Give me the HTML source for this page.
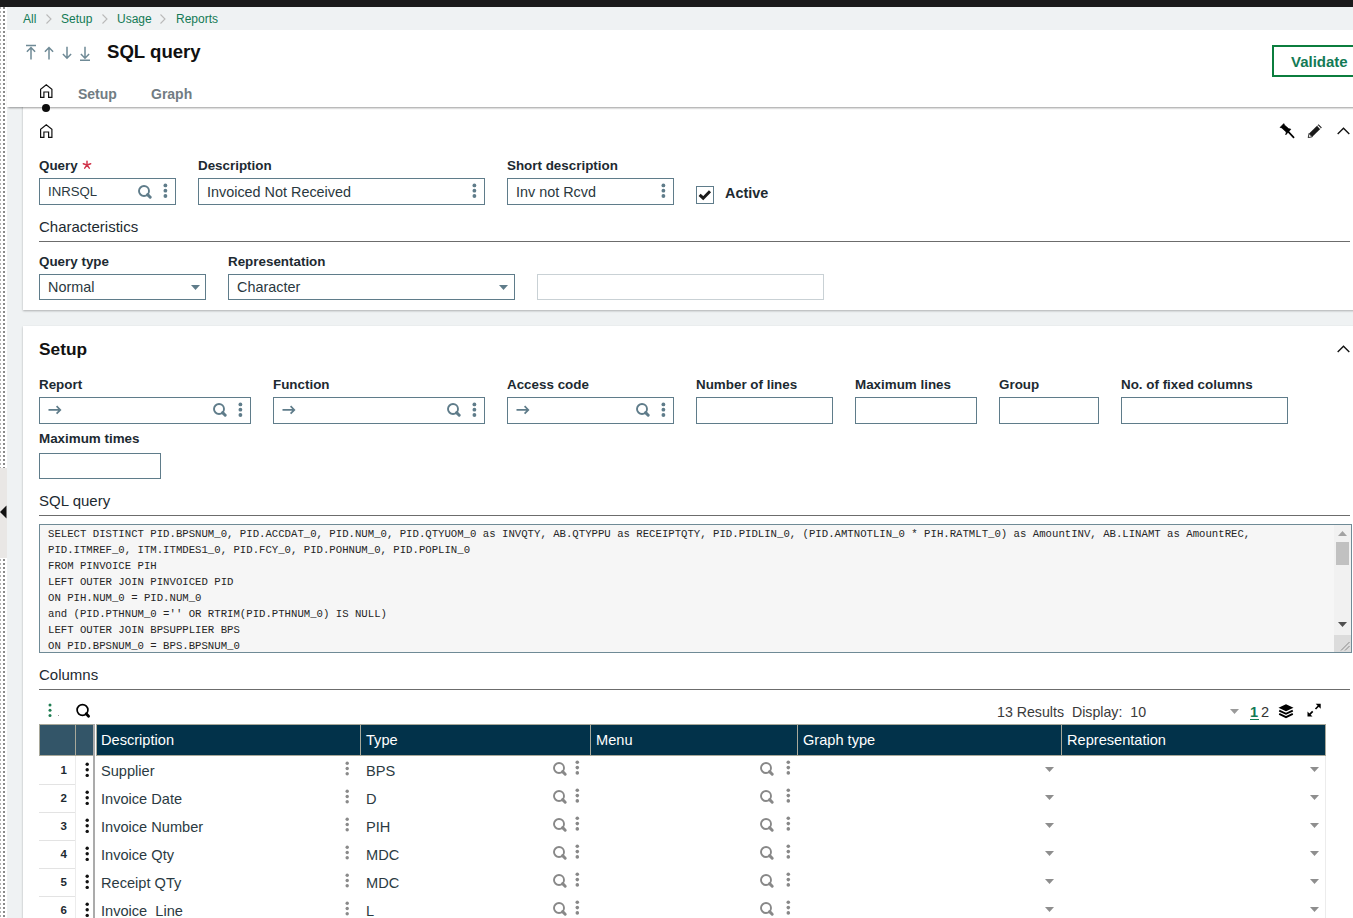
<!DOCTYPE html>
<html><head><meta charset="utf-8">
<style>
*{box-sizing:border-box}
html,body{margin:0;padding:0;width:1353px;height:918px;overflow:hidden;background:#eff2f3;font-family:"Liberation Sans",sans-serif;color:#1d2a31}
.a{position:absolute}
svg{position:absolute;overflow:visible}
#topbar{left:0;top:0;width:1353px;height:7px;background:#1b1b1b}
#dots{left:0;top:7px;width:7px;height:911px;background-color:#fff}
.dc{top:7px;height:911px}
#bc{left:7px;top:8px;width:1346px;height:22px;background:#eff2f3;font-size:12px}
#bc span{position:absolute;top:4px;color:#137a55}
.chev{top:6px;width:6px;height:10px}
#hdr{left:7px;top:30px;width:1360px;height:77px;background:#fff;box-shadow:0 2px 2px -1px rgba(0,0,0,.4)}
.title{left:107px;top:41px;font-size:18.6px;font-weight:bold;color:#101010;white-space:nowrap}
.tab{top:86px;font-size:14px;font-weight:bold;color:#717c83}
#btn{left:1272px;top:45px;width:100px;height:32px;border:2px solid #0b7d3e;color:#137a55;font-weight:bold;font-size:15px;padding:6px 0 0 17px;background:#fff}
.card{left:23px;background:#fff;box-shadow:0 1px 2px rgba(0,0,0,.28);width:1340px}
.lbl{font-size:13.4px;font-weight:bold;color:#1d2a31;white-space:nowrap}
.inp{border:1px solid #5f7c8a;background:#fff}
.itxt{font-size:14.4px;color:#2a3840;white-space:nowrap}
.sect{font-size:15px;color:#1d2a31;white-space:nowrap}
.hline{height:1px;background:#6c6c6c}
.sql{left:39px;top:524px;width:1313px;height:129px;border:1px solid #6f8a96;background:#f6f6f6;overflow:hidden}
.sql pre{margin:0;position:absolute;left:8px;top:1px;font-family:"Liberation Mono",monospace;font-size:10.66px;line-height:16px;color:#252525}
.th{top:725px;height:30px;background:#02324a}
.thtxt{top:732px;font-size:14.6px;color:#fff;white-space:nowrap}
.td{font-size:14.6px;color:#2b3a42;white-space:nowrap}
.rn{font-size:11.5px;font-weight:bold;color:#1d2a31;text-align:right;width:20px}
</style></head><body>
<div id="topbar" class="a"></div>
<div id="dots" class="a"></div>
<div class="a dc" style="left:0;width:1px;background:repeating-linear-gradient(#b0b0b0 0 2px,transparent 2px 4px)"></div>
<div class="a dc" style="left:3px;width:2px;background:repeating-linear-gradient(#8a8a8a 0 2px,transparent 2px 4px)"></div>
<div id="bc" class="a">
 <span style="left:16px">All</span>
 <svg class="chev" style="left:39px" viewBox="0 0 6 10"><path d="M0.5 0.5 L5 5 L0.5 9.5" fill="none" stroke="#b9b9b9" stroke-width="1.1"/></svg>
 <span style="left:54px">Setup</span>
 <svg class="chev" style="left:95px" viewBox="0 0 6 10"><path d="M0.5 0.5 L5 5 L0.5 9.5" fill="none" stroke="#b9b9b9" stroke-width="1.1"/></svg>
 <span style="left:110px">Usage</span>
 <svg class="chev" style="left:153px" viewBox="0 0 6 10"><path d="M0.5 0.5 L5 5 L0.5 9.5" fill="none" stroke="#b9b9b9" stroke-width="1.1"/></svg>
 <span style="left:169px">Reports</span>
</div>
<!-- card 1 -->
<div class="a card" style="top:104px;height:206px"></div>
<div id="hdr" class="a"></div>
<!-- header arrows -->
<svg style="left:25px;top:44px" width="12" height="16" viewBox="0 0 12 16"><g fill="none" stroke="#6f8a96" stroke-width="1.5"><path d="M1 1.5H11M6 3.5V15.5M1.9 7.8L6 3.5L10.1 7.8"/></g></svg>
<svg style="left:43px;top:44px" width="12" height="16" viewBox="0 0 12 16"><g fill="none" stroke="#6f8a96" stroke-width="1.5"><path d="M6 3.5V15.5M1.9 7.8L6 3.5L10.1 7.8"/></g></svg>
<svg style="left:61px;top:44px" width="12" height="18" viewBox="0 0 12 18"><g fill="none" stroke="#6f8a96" stroke-width="1.5"><path d="M6 2.8V14.2M1.9 10L6 14.2L10.1 10"/></g></svg>
<svg style="left:79px;top:44px" width="12" height="18" viewBox="0 0 12 18"><g fill="none" stroke="#6f8a96" stroke-width="1.5"><path d="M6 2.8V14.2M1.9 10L6 14.2L10.1 10M1 16.3H11"/></g></svg>
<div class="a title">SQL query</div>
<!-- tabs -->
<svg style="left:40px;top:84px" width="13" height="14" viewBox="0 0 13 14"><path d="M0.6 13.4V5.3L6.25 0.8L11.9 5.3V13.4H8.6V8H3.9V13.4Z" fill="none" stroke="#111" stroke-width="1.2"/></svg>
<div class="a" style="left:42px;top:104px;width:8px;height:8px;border-radius:50%;background:#0d0d0d"></div>
<div class="a tab" style="left:78px">Setup</div>
<div class="a tab" style="left:151px">Graph</div>
<div id="btn" class="a">Validate</div>

<svg style="left:40px;top:124px" width="13" height="14" viewBox="0 0 13 14"><path d="M0.6 13.4V5.3L6.25 0.8L11.9 5.3V13.4H8.6V8H3.9V13.4Z" fill="none" stroke="#111" stroke-width="1.2"/></svg>
<!-- pin -->
<svg style="left:1279px;top:122px" width="16" height="17" viewBox="0 0 16 17"><path d="M4.8 1.6L5.5 3.1L9.6 6.6L11.9 7.2L6.7 12.9L7.2 10.1L2.7 5.9L1.0 5.4Z" fill="#000" stroke="#000" stroke-width="0.6" stroke-linejoin="round"/><path d="M9 9.4L14.6 15.4" stroke="#000" stroke-width="1.7" stroke-linecap="round"/></svg>
<!-- pencil -->
<svg style="left:1306px;top:122px" width="17" height="17" viewBox="0 0 17 17"><path d="M3.1 11.45L12.6 2.25L15.8 5.55L6.3 14.75Z" fill="#1a1a1a"/><path d="M11.4 3.45L14.6 6.75" stroke="#fff" stroke-width="1.1"/><path d="M2.2 15.6L3.1 11.45L6.3 14.75Z" fill="#fff" stroke="#1a1a1a" stroke-width="0.9" stroke-linejoin="round"/><path d="M3.9 12.3L5.4 13.9" stroke="#1a1a1a" stroke-width="0.8"/></svg>
<svg style="left:1337px;top:127px" width="13" height="8" viewBox="0 0 13 8"><path d="M0.7 7L6.5 1.2L12.3 7" fill="none" stroke="#111" stroke-width="1.4"/></svg>

<div class="a lbl" style="left:39px;top:158px">Query</div>
<svg style="left:79px;top:157px" width="16" height="16" viewBox="0 0 16 16"><path d="M8 8L8.00 4.10M8 8L11.71 6.79M8 8L10.29 11.16M8 8L5.71 11.16M8 8L4.29 6.79" stroke="#d0334a" stroke-width="1.45" stroke-linecap="round"/></svg>
<div class="a inp" style="left:39px;top:178px;width:137px;height:27px"></div>
<div class="a itxt" style="left:48px;top:184px;font-size:13.2px">INRSQL</div>
<div class="a lbl" style="left:198px;top:158px">Description</div>
<div class="a inp" style="left:198px;top:178px;width:287px;height:27px"></div>
<div class="a itxt" style="left:207px;top:184px">Invoiced Not Received</div>
<div class="a lbl" style="left:507px;top:158px">Short description</div>
<div class="a inp" style="left:507px;top:178px;width:167px;height:27px"></div>
<div class="a itxt" style="left:516px;top:184px">Inv not Rcvd</div>
<div class="a" style="left:696px;top:186px;width:18px;height:18px;border:1px solid #5f7c8a;background:#fff"></div>
<svg style="left:698px;top:189px" width="14" height="12" viewBox="0 0 14 12"><path d="M1.6 5.8L5.2 9.2L12 2.2" fill="none" stroke="#1a1a1a" stroke-width="3"/></svg>
<div class="a lbl" style="left:725px;top:185px;font-size:14.4px">Active</div>

<div class="a sect" style="left:39px;top:218px">Characteristics</div>
<div class="a hline" style="left:39px;top:241px;width:1311px"></div>
<div class="a lbl" style="left:39px;top:253.5px">Query type</div>
<div class="a inp" style="left:39px;top:274px;width:167px;height:26px"></div>
<div class="a itxt" style="left:48px;top:278.5px">Normal</div>
<svg style="left:191px;top:285px" width="9" height="5" viewBox="0 0 9 5"><path d="M0 0H9L4.5 5Z" fill="#5f7c8a"/></svg>
<div class="a lbl" style="left:228px;top:253.5px">Representation</div>
<div class="a inp" style="left:228px;top:274px;width:287px;height:26px"></div>
<div class="a itxt" style="left:237px;top:278.5px">Character</div>
<svg style="left:499px;top:285px" width="9" height="5" viewBox="0 0 9 5"><path d="M0 0H9L4.5 5Z" fill="#5f7c8a"/></svg>
<div class="a" style="left:537px;top:274px;width:287px;height:26px;border:1px solid #c9d1d5"></div>

<!-- card 2 -->
<div class="a card" style="top:326px;height:700px"></div>
<div class="a" style="left:39px;top:339px;font-size:17.3px;font-weight:bold;color:#111">Setup</div>
<svg style="left:1337px;top:345px" width="13" height="8" viewBox="0 0 13 8"><path d="M0.7 7L6.5 1.2L12.3 7" fill="none" stroke="#111" stroke-width="1.4"/></svg>

<div class="a lbl" style="left:39px;top:376.5px">Report</div>
<div class="a inp" style="left:39px;top:397px;width:212px;height:27px"></div>
<div class="a lbl" style="left:273px;top:376.5px">Function</div>
<div class="a inp" style="left:273px;top:397px;width:212px;height:27px"></div>
<div class="a lbl" style="left:507px;top:376.5px">Access code</div>
<div class="a inp" style="left:507px;top:397px;width:167px;height:27px"></div>
<div class="a lbl" style="left:696px;top:376.5px">Number of lines</div>
<div class="a inp" style="left:696px;top:397px;width:137px;height:27px"></div>
<div class="a lbl" style="left:855px;top:376.5px">Maximum lines</div>
<div class="a inp" style="left:855px;top:397px;width:122px;height:27px"></div>
<div class="a lbl" style="left:999px;top:376.5px">Group</div>
<div class="a inp" style="left:999px;top:397px;width:100px;height:27px"></div>
<div class="a lbl" style="left:1121px;top:376.5px">No. of fixed columns</div>
<div class="a inp" style="left:1121px;top:397px;width:167px;height:27px"></div>
<div class="a lbl" style="left:39px;top:431px">Maximum times</div>
<div class="a inp" style="left:39px;top:453px;width:122px;height:26px"></div>

<div class="a sect" style="left:39px;top:492px">SQL query</div>
<div class="a hline" style="left:39px;top:515px;width:1311px"></div>
<div class="a sql"><pre>SELECT DISTINCT PID.BPSNUM_0, PID.ACCDAT_0, PID.NUM_0, PID.QTYUOM_0 as INVQTY, AB.QTYPPU as RECEIPTQTY, PID.PIDLIN_0, (PID.AMTNOTLIN_0 * PIH.RATMLT_0) as AmountINV, AB.LINAMT as AmountREC,
PID.ITMREF_0, ITM.ITMDES1_0, PID.FCY_0, PID.POHNUM_0, PID.POPLIN_0
FROM PINVOICE PIH
LEFT OUTER JOIN PINVOICED PID
ON PIH.NUM_0 = PID.NUM_0
and (PID.PTHNUM_0 ='' OR RTRIM(PID.PTHNUM_0) IS NULL)
LEFT OUTER JOIN BPSUPPLIER BPS
ON PID.BPSNUM_0 = BPS.BPSNUM_0
LEFT OUTER JOIN ITMMASTER ITM</pre>
 <div class="a" style="left:1294px;top:0;width:17px;height:127px;background:#f1f1f1"></div>
 <svg style="left:1298px;top:6px" width="9" height="5" viewBox="0 0 9 5"><path d="M0 5H9L4.5 0Z" fill="#a3a3a3"/></svg>
 <div class="a" style="left:1296px;top:17px;width:13px;height:23px;background:#c1c1c1"></div>
 <svg style="left:1298px;top:97px" width="9" height="5" viewBox="0 0 9 5"><path d="M0 0H9L4.5 5Z" fill="#505050"/></svg>
 <div class="a" style="left:1294px;top:110px;width:17px;height:17px;background:#dcdcdc"></div>
 <svg style="left:1300px;top:116px" width="10" height="10" viewBox="0 0 10 10"><path d="M9.5 1L1 9.5M9.5 5L5 9.5" stroke="#8a8a8a" stroke-width="1"/></svg>
</div>

<div class="a sect" style="left:39px;top:666px">Columns</div>
<div class="a hline" style="left:39px;top:689px;width:1311px"></div>
<svg style="left:136.8px;top:184px" width="16" height="16" viewBox="0 0 16 16"><circle cx="7" cy="7" r="5.0" fill="none" stroke="#5f7c8a" stroke-width="1.9"/><path d="M10.6 10.6L13.2 13.2" stroke="#5f7c8a" stroke-width="3.0" stroke-linecap="round"/></svg>
<svg style="left:162.90px;top:183.30px" width="4.80" height="15.40"><circle cx="2.40" cy="2.40" r="1.90" fill="#5f7c8a"/><circle cx="2.40" cy="7.70" r="1.90" fill="#5f7c8a"/><circle cx="2.40" cy="13.00" r="1.90" fill="#5f7c8a"/></svg>
<svg style="left:471.70px;top:183.30px" width="4.80" height="15.40"><circle cx="2.40" cy="2.40" r="1.90" fill="#5f7c8a"/><circle cx="2.40" cy="7.70" r="1.90" fill="#5f7c8a"/><circle cx="2.40" cy="13.00" r="1.90" fill="#5f7c8a"/></svg>
<svg style="left:660.60px;top:183.30px" width="4.80" height="15.40"><circle cx="2.40" cy="2.40" r="1.90" fill="#5f7c8a"/><circle cx="2.40" cy="7.70" r="1.90" fill="#5f7c8a"/><circle cx="2.40" cy="13.00" r="1.90" fill="#5f7c8a"/></svg>
<svg style="left:47.5px;top:405px" width="14" height="10" viewBox="0 0 14 10"><path d="M0.5 4.9H12.2M8.6 1.2L12.3 4.9L8.6 8.6" fill="none" stroke="#5f7c8a" stroke-width="1.7"/></svg>
<svg style="left:212.2px;top:402px" width="16" height="16" viewBox="0 0 16 16"><circle cx="7" cy="7" r="5.0" fill="none" stroke="#5f7c8a" stroke-width="1.9"/><path d="M10.6 10.6L13.2 13.2" stroke="#5f7c8a" stroke-width="3.0" stroke-linecap="round"/></svg>
<svg style="left:237.70px;top:402.30px" width="4.80" height="15.40"><circle cx="2.40" cy="2.40" r="1.90" fill="#5f7c8a"/><circle cx="2.40" cy="7.70" r="1.90" fill="#5f7c8a"/><circle cx="2.40" cy="13.00" r="1.90" fill="#5f7c8a"/></svg>
<svg style="left:281.5px;top:405px" width="14" height="10" viewBox="0 0 14 10"><path d="M0.5 4.9H12.2M8.6 1.2L12.3 4.9L8.6 8.6" fill="none" stroke="#5f7c8a" stroke-width="1.7"/></svg>
<svg style="left:446.2px;top:402px" width="16" height="16" viewBox="0 0 16 16"><circle cx="7" cy="7" r="5.0" fill="none" stroke="#5f7c8a" stroke-width="1.9"/><path d="M10.6 10.6L13.2 13.2" stroke="#5f7c8a" stroke-width="3.0" stroke-linecap="round"/></svg>
<svg style="left:471.70px;top:402.30px" width="4.80" height="15.40"><circle cx="2.40" cy="2.40" r="1.90" fill="#5f7c8a"/><circle cx="2.40" cy="7.70" r="1.90" fill="#5f7c8a"/><circle cx="2.40" cy="13.00" r="1.90" fill="#5f7c8a"/></svg>
<svg style="left:515.5px;top:405px" width="14" height="10" viewBox="0 0 14 10"><path d="M0.5 4.9H12.2M8.6 1.2L12.3 4.9L8.6 8.6" fill="none" stroke="#5f7c8a" stroke-width="1.7"/></svg>
<svg style="left:635.2px;top:402px" width="16" height="16" viewBox="0 0 16 16"><circle cx="7" cy="7" r="5.0" fill="none" stroke="#5f7c8a" stroke-width="1.9"/><path d="M10.6 10.6L13.2 13.2" stroke="#5f7c8a" stroke-width="3.0" stroke-linecap="round"/></svg>
<svg style="left:660.70px;top:402.30px" width="4.80" height="15.40"><circle cx="2.40" cy="2.40" r="1.90" fill="#5f7c8a"/><circle cx="2.40" cy="7.70" r="1.90" fill="#5f7c8a"/><circle cx="2.40" cy="13.00" r="1.90" fill="#5f7c8a"/></svg>
<div class="a" style="left:46px;top:701px"><svg style="left:2.00px;top:2.30px" width="4.00" height="14.40"><circle cx="2.00" cy="2.00" r="1.50" fill="#1f7d52"/><circle cx="2.00" cy="7.20" r="1.50" fill="#1f7d52"/><circle cx="2.00" cy="12.40" r="1.50" fill="#1f7d52"/></svg><div class="a" style="left:11.5px;top:13.5px;width:1.5px;height:1.5px;background:#999"></div></div>
<svg style="left:75px;top:703px" width="16" height="16" viewBox="0 0 16 16"><circle cx="7.5" cy="7" r="5.4" fill="none" stroke="#000" stroke-width="1.7"/><path d="M11.2 10.7L13.6 13.2" stroke="#000" stroke-width="2.8" stroke-linecap="round"/></svg>
<div class="a" style="left:39px;top:724px;width:1287px;height:32px;background:#a8a89a"></div>
<div class="a" style="left:40px;top:725px;width:35px;height:30px;background:#335568"></div>
<div class="a" style="left:76px;top:725px;width:17px;height:30px;background:#335568"></div>
<div class="a" style="left:93px;top:724px;width:3px;height:194px;background:#fff"></div>
<div class="a" style="left:96px;top:724px;width:1px;height:32px;background:#a8a89a"></div>
<div class="a" style="left:93px;top:724px;width:2px;height:194px;background:#ababab"></div>
<div class="a th" style="left:97px;width:263px"></div>
<div class="a thtxt" style="left:101px">Description</div>
<div class="a th" style="left:361px;width:229px"></div>
<div class="a thtxt" style="left:366px">Type</div>
<div class="a th" style="left:591px;width:206px"></div>
<div class="a thtxt" style="left:596px">Menu</div>
<div class="a th" style="left:798px;width:263px"></div>
<div class="a thtxt" style="left:803px">Graph type</div>
<div class="a th" style="left:1062px;width:263px"></div>
<div class="a thtxt" style="left:1067px">Representation</div>
<div class="a" style="left:39px;top:756px;width:54px;height:162px;background:#fff"></div>
<div class="a" style="left:75px;top:756px;width:1px;height:162px;background:#ececec"></div>
<div class="a" style="left:1325px;top:756px;width:1px;height:162px;background:#ececec"></div>
<div class="a" style="left:39px;top:784px;width:36px;height:1px;background:#e3e3e3"></div>
<div class="a rn" style="left:47px;top:764px">1</div>
<svg style="left:84.80px;top:761.70px" width="4.40" height="15.60"><circle cx="2.20" cy="2.20" r="1.70" fill="#111"/><circle cx="2.20" cy="7.80" r="1.70" fill="#111"/><circle cx="2.20" cy="13.40" r="1.70" fill="#111"/></svg>
<div class="a td" style="left:101px;top:763px;white-space:pre">Supplier</div>
<svg style="left:344.80px;top:760.50px" width="4.40" height="15.00"><circle cx="2.20" cy="2.20" r="1.70" fill="#8a8a8a"/><circle cx="2.20" cy="7.50" r="1.70" fill="#8a8a8a"/><circle cx="2.20" cy="12.80" r="1.70" fill="#8a8a8a"/></svg>
<div class="a td" style="left:366px;top:763px">BPS</div>
<svg style="left:552px;top:761px" width="16" height="16" viewBox="0 0 16 16"><circle cx="7" cy="7" r="5.0" fill="none" stroke="#888" stroke-width="1.9"/><path d="M10.6 10.6L13.2 13.2" stroke="#888" stroke-width="3.0" stroke-linecap="round"/></svg>
<svg style="left:574.70px;top:760.40px" width="4.60" height="15.20"><circle cx="2.30" cy="2.30" r="1.80" fill="#888"/><circle cx="2.30" cy="7.60" r="1.80" fill="#888"/><circle cx="2.30" cy="12.90" r="1.80" fill="#888"/></svg>
<svg style="left:758.5px;top:761px" width="16" height="16" viewBox="0 0 16 16"><circle cx="7" cy="7" r="5.0" fill="none" stroke="#888" stroke-width="1.9"/><path d="M10.6 10.6L13.2 13.2" stroke="#888" stroke-width="3.0" stroke-linecap="round"/></svg>
<svg style="left:786.20px;top:760.40px" width="4.60" height="15.20"><circle cx="2.30" cy="2.30" r="1.80" fill="#888"/><circle cx="2.30" cy="7.60" r="1.80" fill="#888"/><circle cx="2.30" cy="12.90" r="1.80" fill="#888"/></svg>
<svg style="left:1045px;top:767px" width="9" height="5" viewBox="0 0 9 5"><path d="M0 0H9L4.5 5Z" fill="#8e8e8e"/></svg>
<svg style="left:1310px;top:767px" width="9" height="5" viewBox="0 0 9 5"><path d="M0 0H9L4.5 5Z" fill="#8e8e8e"/></svg>
<div class="a" style="left:39px;top:812px;width:36px;height:1px;background:#e3e3e3"></div>
<div class="a rn" style="left:47px;top:792px">2</div>
<svg style="left:84.80px;top:789.70px" width="4.40" height="15.60"><circle cx="2.20" cy="2.20" r="1.70" fill="#111"/><circle cx="2.20" cy="7.80" r="1.70" fill="#111"/><circle cx="2.20" cy="13.40" r="1.70" fill="#111"/></svg>
<div class="a td" style="left:101px;top:791px;white-space:pre">Invoice Date</div>
<svg style="left:344.80px;top:788.50px" width="4.40" height="15.00"><circle cx="2.20" cy="2.20" r="1.70" fill="#8a8a8a"/><circle cx="2.20" cy="7.50" r="1.70" fill="#8a8a8a"/><circle cx="2.20" cy="12.80" r="1.70" fill="#8a8a8a"/></svg>
<div class="a td" style="left:366px;top:791px">D</div>
<svg style="left:552px;top:789px" width="16" height="16" viewBox="0 0 16 16"><circle cx="7" cy="7" r="5.0" fill="none" stroke="#888" stroke-width="1.9"/><path d="M10.6 10.6L13.2 13.2" stroke="#888" stroke-width="3.0" stroke-linecap="round"/></svg>
<svg style="left:574.70px;top:788.40px" width="4.60" height="15.20"><circle cx="2.30" cy="2.30" r="1.80" fill="#888"/><circle cx="2.30" cy="7.60" r="1.80" fill="#888"/><circle cx="2.30" cy="12.90" r="1.80" fill="#888"/></svg>
<svg style="left:758.5px;top:789px" width="16" height="16" viewBox="0 0 16 16"><circle cx="7" cy="7" r="5.0" fill="none" stroke="#888" stroke-width="1.9"/><path d="M10.6 10.6L13.2 13.2" stroke="#888" stroke-width="3.0" stroke-linecap="round"/></svg>
<svg style="left:786.20px;top:788.40px" width="4.60" height="15.20"><circle cx="2.30" cy="2.30" r="1.80" fill="#888"/><circle cx="2.30" cy="7.60" r="1.80" fill="#888"/><circle cx="2.30" cy="12.90" r="1.80" fill="#888"/></svg>
<svg style="left:1045px;top:795px" width="9" height="5" viewBox="0 0 9 5"><path d="M0 0H9L4.5 5Z" fill="#8e8e8e"/></svg>
<svg style="left:1310px;top:795px" width="9" height="5" viewBox="0 0 9 5"><path d="M0 0H9L4.5 5Z" fill="#8e8e8e"/></svg>
<div class="a" style="left:39px;top:840px;width:36px;height:1px;background:#e3e3e3"></div>
<div class="a rn" style="left:47px;top:820px">3</div>
<svg style="left:84.80px;top:817.70px" width="4.40" height="15.60"><circle cx="2.20" cy="2.20" r="1.70" fill="#111"/><circle cx="2.20" cy="7.80" r="1.70" fill="#111"/><circle cx="2.20" cy="13.40" r="1.70" fill="#111"/></svg>
<div class="a td" style="left:101px;top:819px;white-space:pre">Invoice Number</div>
<svg style="left:344.80px;top:816.50px" width="4.40" height="15.00"><circle cx="2.20" cy="2.20" r="1.70" fill="#8a8a8a"/><circle cx="2.20" cy="7.50" r="1.70" fill="#8a8a8a"/><circle cx="2.20" cy="12.80" r="1.70" fill="#8a8a8a"/></svg>
<div class="a td" style="left:366px;top:819px">PIH</div>
<svg style="left:552px;top:817px" width="16" height="16" viewBox="0 0 16 16"><circle cx="7" cy="7" r="5.0" fill="none" stroke="#888" stroke-width="1.9"/><path d="M10.6 10.6L13.2 13.2" stroke="#888" stroke-width="3.0" stroke-linecap="round"/></svg>
<svg style="left:574.70px;top:816.40px" width="4.60" height="15.20"><circle cx="2.30" cy="2.30" r="1.80" fill="#888"/><circle cx="2.30" cy="7.60" r="1.80" fill="#888"/><circle cx="2.30" cy="12.90" r="1.80" fill="#888"/></svg>
<svg style="left:758.5px;top:817px" width="16" height="16" viewBox="0 0 16 16"><circle cx="7" cy="7" r="5.0" fill="none" stroke="#888" stroke-width="1.9"/><path d="M10.6 10.6L13.2 13.2" stroke="#888" stroke-width="3.0" stroke-linecap="round"/></svg>
<svg style="left:786.20px;top:816.40px" width="4.60" height="15.20"><circle cx="2.30" cy="2.30" r="1.80" fill="#888"/><circle cx="2.30" cy="7.60" r="1.80" fill="#888"/><circle cx="2.30" cy="12.90" r="1.80" fill="#888"/></svg>
<svg style="left:1045px;top:823px" width="9" height="5" viewBox="0 0 9 5"><path d="M0 0H9L4.5 5Z" fill="#8e8e8e"/></svg>
<svg style="left:1310px;top:823px" width="9" height="5" viewBox="0 0 9 5"><path d="M0 0H9L4.5 5Z" fill="#8e8e8e"/></svg>
<div class="a" style="left:39px;top:868px;width:36px;height:1px;background:#e3e3e3"></div>
<div class="a rn" style="left:47px;top:848px">4</div>
<svg style="left:84.80px;top:845.70px" width="4.40" height="15.60"><circle cx="2.20" cy="2.20" r="1.70" fill="#111"/><circle cx="2.20" cy="7.80" r="1.70" fill="#111"/><circle cx="2.20" cy="13.40" r="1.70" fill="#111"/></svg>
<div class="a td" style="left:101px;top:847px;white-space:pre">Invoice Qty</div>
<svg style="left:344.80px;top:844.50px" width="4.40" height="15.00"><circle cx="2.20" cy="2.20" r="1.70" fill="#8a8a8a"/><circle cx="2.20" cy="7.50" r="1.70" fill="#8a8a8a"/><circle cx="2.20" cy="12.80" r="1.70" fill="#8a8a8a"/></svg>
<div class="a td" style="left:366px;top:847px">MDC</div>
<svg style="left:552px;top:845px" width="16" height="16" viewBox="0 0 16 16"><circle cx="7" cy="7" r="5.0" fill="none" stroke="#888" stroke-width="1.9"/><path d="M10.6 10.6L13.2 13.2" stroke="#888" stroke-width="3.0" stroke-linecap="round"/></svg>
<svg style="left:574.70px;top:844.40px" width="4.60" height="15.20"><circle cx="2.30" cy="2.30" r="1.80" fill="#888"/><circle cx="2.30" cy="7.60" r="1.80" fill="#888"/><circle cx="2.30" cy="12.90" r="1.80" fill="#888"/></svg>
<svg style="left:758.5px;top:845px" width="16" height="16" viewBox="0 0 16 16"><circle cx="7" cy="7" r="5.0" fill="none" stroke="#888" stroke-width="1.9"/><path d="M10.6 10.6L13.2 13.2" stroke="#888" stroke-width="3.0" stroke-linecap="round"/></svg>
<svg style="left:786.20px;top:844.40px" width="4.60" height="15.20"><circle cx="2.30" cy="2.30" r="1.80" fill="#888"/><circle cx="2.30" cy="7.60" r="1.80" fill="#888"/><circle cx="2.30" cy="12.90" r="1.80" fill="#888"/></svg>
<svg style="left:1045px;top:851px" width="9" height="5" viewBox="0 0 9 5"><path d="M0 0H9L4.5 5Z" fill="#8e8e8e"/></svg>
<svg style="left:1310px;top:851px" width="9" height="5" viewBox="0 0 9 5"><path d="M0 0H9L4.5 5Z" fill="#8e8e8e"/></svg>
<div class="a" style="left:39px;top:896px;width:36px;height:1px;background:#e3e3e3"></div>
<div class="a rn" style="left:47px;top:876px">5</div>
<svg style="left:84.80px;top:873.70px" width="4.40" height="15.60"><circle cx="2.20" cy="2.20" r="1.70" fill="#111"/><circle cx="2.20" cy="7.80" r="1.70" fill="#111"/><circle cx="2.20" cy="13.40" r="1.70" fill="#111"/></svg>
<div class="a td" style="left:101px;top:875px;white-space:pre">Receipt QTy</div>
<svg style="left:344.80px;top:872.50px" width="4.40" height="15.00"><circle cx="2.20" cy="2.20" r="1.70" fill="#8a8a8a"/><circle cx="2.20" cy="7.50" r="1.70" fill="#8a8a8a"/><circle cx="2.20" cy="12.80" r="1.70" fill="#8a8a8a"/></svg>
<div class="a td" style="left:366px;top:875px">MDC</div>
<svg style="left:552px;top:873px" width="16" height="16" viewBox="0 0 16 16"><circle cx="7" cy="7" r="5.0" fill="none" stroke="#888" stroke-width="1.9"/><path d="M10.6 10.6L13.2 13.2" stroke="#888" stroke-width="3.0" stroke-linecap="round"/></svg>
<svg style="left:574.70px;top:872.40px" width="4.60" height="15.20"><circle cx="2.30" cy="2.30" r="1.80" fill="#888"/><circle cx="2.30" cy="7.60" r="1.80" fill="#888"/><circle cx="2.30" cy="12.90" r="1.80" fill="#888"/></svg>
<svg style="left:758.5px;top:873px" width="16" height="16" viewBox="0 0 16 16"><circle cx="7" cy="7" r="5.0" fill="none" stroke="#888" stroke-width="1.9"/><path d="M10.6 10.6L13.2 13.2" stroke="#888" stroke-width="3.0" stroke-linecap="round"/></svg>
<svg style="left:786.20px;top:872.40px" width="4.60" height="15.20"><circle cx="2.30" cy="2.30" r="1.80" fill="#888"/><circle cx="2.30" cy="7.60" r="1.80" fill="#888"/><circle cx="2.30" cy="12.90" r="1.80" fill="#888"/></svg>
<svg style="left:1045px;top:879px" width="9" height="5" viewBox="0 0 9 5"><path d="M0 0H9L4.5 5Z" fill="#8e8e8e"/></svg>
<svg style="left:1310px;top:879px" width="9" height="5" viewBox="0 0 9 5"><path d="M0 0H9L4.5 5Z" fill="#8e8e8e"/></svg>
<div class="a rn" style="left:47px;top:904px">6</div>
<svg style="left:84.80px;top:901.70px" width="4.40" height="15.60"><circle cx="2.20" cy="2.20" r="1.70" fill="#111"/><circle cx="2.20" cy="7.80" r="1.70" fill="#111"/><circle cx="2.20" cy="13.40" r="1.70" fill="#111"/></svg>
<div class="a td" style="left:101px;top:903px;white-space:pre">Invoice  Line</div>
<svg style="left:344.80px;top:900.50px" width="4.40" height="15.00"><circle cx="2.20" cy="2.20" r="1.70" fill="#8a8a8a"/><circle cx="2.20" cy="7.50" r="1.70" fill="#8a8a8a"/><circle cx="2.20" cy="12.80" r="1.70" fill="#8a8a8a"/></svg>
<div class="a td" style="left:366px;top:903px">L</div>
<svg style="left:552px;top:901px" width="16" height="16" viewBox="0 0 16 16"><circle cx="7" cy="7" r="5.0" fill="none" stroke="#888" stroke-width="1.9"/><path d="M10.6 10.6L13.2 13.2" stroke="#888" stroke-width="3.0" stroke-linecap="round"/></svg>
<svg style="left:574.70px;top:900.40px" width="4.60" height="15.20"><circle cx="2.30" cy="2.30" r="1.80" fill="#888"/><circle cx="2.30" cy="7.60" r="1.80" fill="#888"/><circle cx="2.30" cy="12.90" r="1.80" fill="#888"/></svg>
<svg style="left:758.5px;top:901px" width="16" height="16" viewBox="0 0 16 16"><circle cx="7" cy="7" r="5.0" fill="none" stroke="#888" stroke-width="1.9"/><path d="M10.6 10.6L13.2 13.2" stroke="#888" stroke-width="3.0" stroke-linecap="round"/></svg>
<svg style="left:786.20px;top:900.40px" width="4.60" height="15.20"><circle cx="2.30" cy="2.30" r="1.80" fill="#888"/><circle cx="2.30" cy="7.60" r="1.80" fill="#888"/><circle cx="2.30" cy="12.90" r="1.80" fill="#888"/></svg>
<svg style="left:1045px;top:907px" width="9" height="5" viewBox="0 0 9 5"><path d="M0 0H9L4.5 5Z" fill="#8e8e8e"/></svg>
<svg style="left:1310px;top:907px" width="9" height="5" viewBox="0 0 9 5"><path d="M0 0H9L4.5 5Z" fill="#8e8e8e"/></svg>
<div class="a td" style="left:997px;top:704px;color:#3a3a3a;white-space:pre;font-size:14.2px">13 Results  Display:  10</div>
<svg style="left:1230px;top:709px" width="9" height="5" viewBox="0 0 9 5"><path d="M0 0H9L4.5 5Z" fill="#9a9a9a"/></svg>
<div class="a td" style="left:1250px;top:704px;color:#137a55;font-weight:bold">1</div>
<div class="a" style="left:1250px;top:719px;width:9px;height:1.2px;background:#137a55"></div>
<div class="a td" style="left:1261px;top:704px;color:#333">2</div>
<svg style="left:1278px;top:704px" width="16" height="15" viewBox="0 0 16 15"><path d="M8 0.3L15.5 3.7L8 7.3L0.5 3.7Z" fill="#000"/><path d="M1.2 6.6L8 9.8L14.8 6.6M1.2 9.9L8 13.1L14.8 9.9" fill="none" stroke="#000" stroke-width="1.9"/></svg>
<svg style="left:1306px;top:702px" width="16" height="16" viewBox="0 0 16 16"><path d="M9.7 1.8H14.7V6.8Z M1.5 9.6V14.6H6.5Z" fill="#000"/><path d="M13.5 3L9.5 7M2.7 13.4L6.7 9.4" stroke="#000" stroke-width="1.7"/></svg>
<div class="a" style="left:0;top:468px;width:7px;height:90px;background:#e9e7e5"></div>
<svg style="left:0px;top:505px" width="7" height="14" viewBox="0 0 7 14"><path d="M0 7L6.5 0.5V13.5Z" fill="#111"/></svg>
</body></html>
